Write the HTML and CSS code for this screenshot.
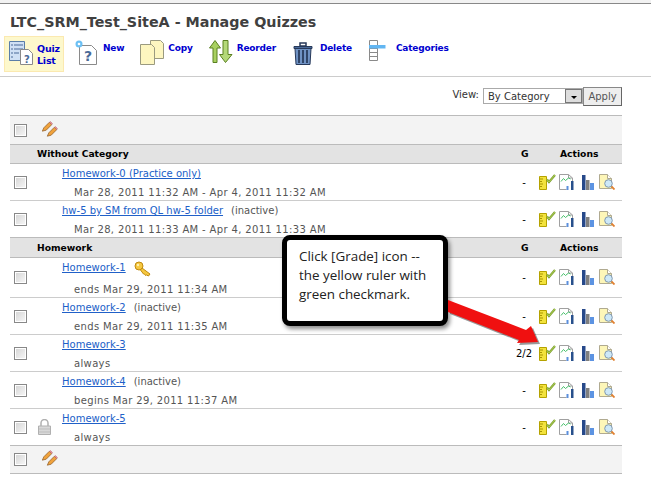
FILE: index.html
```html
<!DOCTYPE html>
<html lang="en">
<head>
<meta charset="utf-8">
<title>Manage Quizzes</title>
<link rel="stylesheet" href="styles.css">
</head>
<body>
<svg class="defs" width="0" height="0" aria-hidden="true">
  <defs>
    <g id="i-pencils">
      <path d="M.3 10.200 1.800 6.800 7.300 1.300 9.700 3.700 4.200 9.200z" fill="#f0a23c" stroke="#8a5a28" stroke-width=".7"/>
      <path d="M7.300 1.300 8.500.5 10.500 2.500 9.700 3.700z" fill="#ea8c96" stroke="#a06060" stroke-width=".4"/>
      <path d="M5.300 15.200 6.800 11.800 12.300 6.300 14.700 8.700 9.200 14.200z" fill="#f0a23c" stroke="#8a5a28" stroke-width=".7"/>
      <path d="M12.300 6.300 13.500 5.500 15.500 7.500 14.700 8.700z" fill="#ea8c96" stroke="#a06060" stroke-width=".4"/>
    </g>
    <g id="i-grade">
      <path d="M.5 2.500h7v13h-7z" fill="#f2e23c" stroke="#b5a200"/>
      <path d="M1 5h3M1 7.500h2M1 10h3M1 12.500h2" stroke="#a89600" fill="none"/>
      <path d="M8 5.500 10 8 16 1" fill="none" stroke="#7c9e30" stroke-width="2.200"/>
      <path d="M8 5.500 10 8 16 1" fill="none" stroke="#b7dc5a" stroke-width=".8"/>
    </g>
    <g id="i-stats">
      <path d="M.5.500h9l4 3.500v3M.5.500v15h7" fill="#fff" stroke="#a0a0a0"/>
      <path d="M9.500.500v3.500h4" fill="none" stroke="#a0a0a0"/>
      <path d="M2 7.500l2.500-3 2 2 3-2.500 2 1" fill="none" stroke="#46c06a"/>
      <path d="M7.500 12h2v4h-2z" fill="#5b8fdc"/>
      <path d="M12 7h2.500v9H12z" fill="#28508c"/>
    </g>
    <g id="i-bars">
      <path d="M0 0h3.500v15H0z" fill="#27498a"/>
      <path d="M4 5h3.500v10H4z" fill="#7f7f7f"/>
      <path d="M8 8h4v7H8z" fill="#5c93e2"/>
    </g>
    <g id="i-preview">
      <path d="M.5.500h8l4 4v10H.5z" fill="#fdf6b8" stroke="#b0aa90"/>
      <path d="M8.500.500v4h4" fill="#fff" stroke="#b0aa90"/>
      <circle cx="9.500" cy="9.500" r="3.800" fill="#cde8f8" stroke="#8098b0"/>
      <path d="M12.500 12.500l3 3" stroke="#e08030" stroke-width="1.800"/>
    </g>
  </defs>
</svg>

<div class="topline"></div>
<h1 class="title">LTC_SRM_Test_SiteA - Manage Quizzes</h1>

<nav class="toolbar">
  <a class="tool tool-active tool-list" href="#">
    <svg width="25" height="25" viewBox="0 0 25 25"><path d="M.5.500h15v19H.5z" fill="#cfe0f4" stroke="#5a7ea8"/><path d="M2 4h2M5 4h9M2 8h2M5 8h9M2 12h2M5 12h5M2 16h2" stroke="#4a6a98"/><path d="M11.500 8.500h8l4 4v11h-12z" fill="#fff" stroke="#8a8a8a"/><text x="15" y="22" class="qmark-s">?</text></svg>
    <span>Quiz<br>List</span>
  </a>
  <a class="tool tool-new" href="#">
    <svg width="24" height="25" viewBox="0 0 24 25"><path d="M4.500 5.500h12l5 5v14h-17z" fill="#fff" stroke="#8a8a8a"/><circle cx="4" cy="4" r="3.500" fill="#6cc0f4"/><circle cx="4" cy="4" r="1.300" fill="#fff"/><text x="9" y="21" class="qmark">?</text></svg>
    <span>New</span>
  </a>
  <a class="tool tool-copy" href="#">
    <svg width="25" height="25" viewBox="0 0 25 25"><path d="M10.500.500h10l3 3v15h-13z" fill="#fdf6c0" stroke="#9a9a80"/><path d="M.5 4.500h11l3 3v17H.5z" fill="#fdf6c0" stroke="#9a9a80"/></svg>
    <span>Copy</span>
  </a>
  <a class="tool tool-reorder" href="#">
    <svg width="24" height="23" viewBox="0 0 24 23"><path d="M6 .5.500 8H4v14.500h4V8h3.500z" fill="#a8d060" stroke="#5a8020"/><path d="M14 .5v14h-3.500L16.500 22.500l6.500-8h-4V.5z" fill="#b4d878" stroke="#5a8020"/></svg>
    <span>Reorder</span>
  </a>
  <a class="tool tool-delete" href="#">
    <svg width="20" height="25" viewBox="0 0 20 25"><path d="M1 5.500h18v2H1z" fill="#4a6a9a" stroke="#27395a"/><path d="M7 2h6v3H7z" fill="none" stroke="#27395a" stroke-width="1.500"/><path d="M2 7.500h16l-1 16H3z" fill="#6f92c4" stroke="#27395a"/><path d="M6 9v13M10 9v13M14 9v13" stroke="#1d2c4a" stroke-width="1.500"/></svg>
    <span>Delete</span>
  </a>
  <a class="tool tool-cat" href="#">
    <svg width="17" height="21" viewBox="0 0 17 21"><path d="M.5.500h8v20h-8zM.5 8.500h8M.5 12.500h8M.5 16.500h8" fill="#fff" stroke="#8a8a8a"/><path d="M0 5h16.500v3.500H0z" fill="#62b6f2"/></svg>
    <span>Categories</span>
  </a>
</nav>

<div class="viewbar">
  <span class="view-label">View:</span>
  <span class="select"><span class="select-text">By Category</span><span class="select-btn"><i></i></span></span>
  <button class="apply" type="button">Apply</button>
</div>

<main class="list">
  <div class="bulk bulk-top">
    <span class="check"></span>
    <svg class="pencils" width="16" height="16" viewBox="0 0 16 16"><use href="#i-pencils"/></svg>
  </div>

  <div class="cat cat-1"><span class="cat-name">Without Category</span><span class="col-g">G</span><span class="col-actions">Actions</span></div>

  <div class="row">
    <span class="check"></span><span class="flag"></span>
    <div class="info"><div class="line1"><a href="#">Homework-0 (Practice only)</a></div><div class="line2">Mar 28, 2011 11:32 AM - Apr 4, 2011 11:32 AM</div></div>
    <span class="grade">-</span>
    <span class="acts"><svg class="a1" width="17" height="16" viewBox="0 0 17 16"><use href="#i-grade"/></svg><svg class="a2" width="15" height="16" viewBox="0 0 15 16"><use href="#i-stats"/></svg><svg class="a3" width="12" height="15" viewBox="0 0 12 15"><use href="#i-bars"/></svg><svg class="a4" width="16" height="16" viewBox="0 0 16 16"><use href="#i-preview"/></svg></span>
  </div>
  <div class="row">
    <span class="check"></span><span class="flag"></span>
    <div class="info"><div class="line1"><a href="#">hw-5 by SM from QL hw-5 folder</a><span class="state">(inactive)</span></div><div class="line2">Mar 28, 2011 11:33 AM - Apr 4, 2011 11:33 AM</div></div>
    <span class="grade">-</span>
    <span class="acts"><svg class="a1" width="17" height="16" viewBox="0 0 17 16"><use href="#i-grade"/></svg><svg class="a2" width="15" height="16" viewBox="0 0 15 16"><use href="#i-stats"/></svg><svg class="a3" width="12" height="15" viewBox="0 0 12 15"><use href="#i-bars"/></svg><svg class="a4" width="16" height="16" viewBox="0 0 16 16"><use href="#i-preview"/></svg></span>
  </div>

  <div class="cat cat-2"><span class="cat-name">Homework</span><span class="col-g">G</span><span class="col-actions">Actions</span></div>

  <div class="row row-tall">
    <span class="check"></span><span class="flag"></span>
    <div class="info"><div class="line1"><a href="#">Homework-1</a><svg class="key" width="17" height="16" viewBox="0 0 17 16"><circle cx="5" cy="5" r="4" fill="#f6c840" stroke="#c08a10"/><circle cx="4" cy="4" r="1.200" fill="#fff2b0"/><path d="M8 7l8 6-1.500 2-2-1-1 .5-1-1.500-1 0L6.500 9z" fill="#f6c840" stroke="#c08a10"/></svg></div><div class="line2">ends Mar 29, 2011 11:34 AM</div></div>
    <span class="grade">-</span>
    <span class="acts"><svg class="a1" width="17" height="16" viewBox="0 0 17 16"><use href="#i-grade"/></svg><svg class="a2" width="15" height="16" viewBox="0 0 15 16"><use href="#i-stats"/></svg><svg class="a3" width="12" height="15" viewBox="0 0 12 15"><use href="#i-bars"/></svg><svg class="a4" width="16" height="16" viewBox="0 0 16 16"><use href="#i-preview"/></svg></span>
  </div>
  <div class="row">
    <span class="check"></span><span class="flag"></span>
    <div class="info"><div class="line1"><a href="#">Homework-2</a><span class="state">(inactive)</span></div><div class="line2">ends Mar 29, 2011 11:35 AM</div></div>
    <span class="grade">-</span>
    <span class="acts"><svg class="a1" width="17" height="16" viewBox="0 0 17 16"><use href="#i-grade"/></svg><svg class="a2" width="15" height="16" viewBox="0 0 15 16"><use href="#i-stats"/></svg><svg class="a3" width="12" height="15" viewBox="0 0 12 15"><use href="#i-bars"/></svg><svg class="a4" width="16" height="16" viewBox="0 0 16 16"><use href="#i-preview"/></svg></span>
  </div>
  <div class="row">
    <span class="check"></span><span class="flag"></span>
    <div class="info"><div class="line1"><a href="#">Homework-3</a></div><div class="line2">always</div></div>
    <span class="grade">2/2</span>
    <span class="acts"><svg class="a1" width="17" height="16" viewBox="0 0 17 16"><use href="#i-grade"/></svg><svg class="a2" width="15" height="16" viewBox="0 0 15 16"><use href="#i-stats"/></svg><svg class="a3" width="12" height="15" viewBox="0 0 12 15"><use href="#i-bars"/></svg><svg class="a4" width="16" height="16" viewBox="0 0 16 16"><use href="#i-preview"/></svg></span>
  </div>
  <div class="row">
    <span class="check"></span><span class="flag"></span>
    <div class="info"><div class="line1"><a href="#">Homework-4</a><span class="state">(inactive)</span></div><div class="line2">begins Mar 29, 2011 11:37 AM</div></div>
    <span class="grade">-</span>
    <span class="acts"><svg class="a1" width="17" height="16" viewBox="0 0 17 16"><use href="#i-grade"/></svg><svg class="a2" width="15" height="16" viewBox="0 0 15 16"><use href="#i-stats"/></svg><svg class="a3" width="12" height="15" viewBox="0 0 12 15"><use href="#i-bars"/></svg><svg class="a4" width="16" height="16" viewBox="0 0 16 16"><use href="#i-preview"/></svg></span>
  </div>
  <div class="row">
    <span class="check"></span><span class="flag"><svg width="13" height="16" viewBox="0 0 13 16"><path d="M3 7V4a3.500 3.500 0 0 1 7 0v3" fill="none" stroke="#b0b0b0" stroke-width="1.500"/><path d="M.5 7h12v8.500H.5z" fill="#d8d8d8" stroke="#b0b0b0"/><path d="M1 10h11M1 13h11" stroke="#bdbdbd"/></svg></span>
    <div class="info"><div class="line1"><a href="#">Homework-5</a></div><div class="line2">always</div></div>
    <span class="grade">-</span>
    <span class="acts"><svg class="a1" width="17" height="16" viewBox="0 0 17 16"><use href="#i-grade"/></svg><svg class="a2" width="15" height="16" viewBox="0 0 15 16"><use href="#i-stats"/></svg><svg class="a3" width="12" height="15" viewBox="0 0 12 15"><use href="#i-bars"/></svg><svg class="a4" width="16" height="16" viewBox="0 0 16 16"><use href="#i-preview"/></svg></span>
  </div>

  <div class="bulk bulk-bottom">
    <span class="check"></span>
    <svg class="pencils" width="16" height="16" viewBox="0 0 16 16"><use href="#i-pencils"/></svg>
  </div>
</main>

<div class="callout">Click [Grade] icon --<br>the yellow ruler with<br>green checkmark.</div>
<svg class="arrow" width="100" height="60" viewBox="0 0 100 60">
  <path d="M1 3 1 15 72 43 70 46 91 45 84 29 79 33z" fill="#000" opacity=".4" transform="translate(2 2)"/>
  <path d="M1 3 1 15 72 43 70 46 91 45 84 29 79 33z" fill="#f01010"/>
</svg>
</body>
</html>
```

FILE: styles.css
```css
* { box-sizing: border-box; }
html, body { margin: 0; padding: 0; }
body {
  width: 651px;
  height: 497px;
  overflow: hidden;
  background: #fff;
  font-family: "DejaVu Sans", Verdana, sans-serif;
  font-size: 10px;
  color: #444;
  position: relative;
}
.defs { position: absolute; }
.topline { height: 4px; background: #f2f2f2; border-bottom: 1px solid #888; }
.title {
  margin: 9px 0 0 10px;
  font-size: 14.3px;
  line-height: 18px;
  font-weight: bold;
  color: #404040;
  white-space: nowrap;
}
.toolbar {
  margin: 5px 0 0;
  height: 41px;
  padding: 0 0 4px 4px;
  border-bottom: 1px solid #ccc;
  display: flex;
  align-items: flex-start;
}
.tool {
  display: flex;
  align-items: flex-start;
  color: #0000d0;
  font-weight: bold;
  font-size: 9px;
  letter-spacing: -.2px;
  line-height: 12px;
  text-decoration: none;
  height: 36px;
  padding-top: 4px;
}
.tool span { margin-top: 2px; }
.tool-active {
  width: 60px;
  background: #fdf8cc;
  border: 1px solid #fbe9b0;
  padding: 4px 0 0 4px;
  font-size: 9.5px;
}
.tool-active svg { margin-right: 3px; }
.tool-new { margin-left: 11px; }
.tool-new span { margin-left: 4px; }
.tool-copy { margin-left: 16px; }
.tool-copy span { margin-left: 3px; }
.tool-reorder { margin-left: 16px; }
.tool-reorder span { margin-left: 4px; }
.tool-delete { margin-left: 17px; }
.tool-delete svg { margin-top: 1px; }
.tool-delete span { margin-left: 7px; }
.tool-cat { margin-left: 17px; }
.tool-cat span { margin-left: 10px; }
.qmark, .qmark-s { font-weight: bold; fill: #4a6a98; letter-spacing: 0; }
.qmark { font-size: 14px; }
.qmark-s { font-size: 10px; }

.viewbar {
  margin: 10px 29px 0 0;
  height: 28px;
  display: flex;
  justify-content: flex-end;
  align-items: flex-start;
}
.view-label { color: #333; font-size: 10px; line-height: 12px; margin: 2px 4px 0 0; }
.select {
  width: 100px;
  height: 16px;
  border: 1px solid #aaa;
  background: #fff;
  display: flex;
  align-items: center;
  justify-content: space-between;
  margin-top: 1px;
}
.select-text { margin-left: 4px; font-size: 10px; color: #333; }
.select-btn {
  width: 17px;
  height: 14px;
  background: #ddd;
  border: 1px solid #777;
  display: flex;
  align-items: center;
  justify-content: center;
}
.select-btn i {
  margin-top: 3px;
  border: 3px solid transparent;
  border-top: 3px solid #000;
  border-bottom: 0;
}
.apply {
  width: 39px;
  height: 19px;
  padding: 0;
  margin: 0;
  font: 10px "DejaVu Sans", Verdana, sans-serif;
  color: #555;
  background: #eee;
  border: 1px solid #888;
  border-right-color: #666;
  border-bottom-color: #666;
}

.list { margin: 0 29px 0 10px; width: 612px; }
.check {
  display: block;
  flex: none;
  width: 13px;
  height: 13px;
  margin-left: 4px;
  border: 1px solid #888;
  background: linear-gradient(135deg, #d4d4d4, #f8f8f8);
  box-shadow: inset 0 0 0 1px #fff;
}
.bulk {
  display: flex;
  align-items: center;
  background: #f3f3f3;
  border-top: 1px solid #bbb;
}
.bulk-top { height: 29px; }
.bulk-bottom { height: 29px; border-bottom: 1px solid #bbb; margin-top: -1px; }
.pencils { margin-left: 15px; margin-top: -3px; }
.cat {
  display: flex;
  align-items: center;
  height: 20px;
  background: #e3e3e3;
  border-top: 1px solid #bbb;
  border-bottom: 1px solid #bbb;
  font-weight: bold;
  color: #000;
  font-size: 9.2px;
}
.cat-1 { padding-bottom: 2px; }
.cat-2 { margin-top: -1px; height: 21px; }
.cat-name { margin-left: 27px; flex: 1; }
.col-g { width: 39px; }
.col-actions { width: 62px; }
.row {
  display: flex;
  align-items: stretch;
  height: 37px;
  border-bottom: 1px solid #ccc;
}
.row-tall { height: 40px; }
.row > .check { align-self: center; }
.flag { width: 13px; margin-left: 11px; margin-right: 5px; display: flex; align-items: center; flex: none; }
.info { margin-left: 6px; flex: 1; padding-top: 3px; min-width: 0; }
.line1 { height: 15px; line-height: 13px; display: flex; align-items: flex-start; white-space: nowrap; }
.line1 a { color: #2060c8; text-decoration: underline; }
.state { margin-left: 8px; color: #555; }
.line2 { margin: 4px 0 0 12px; line-height: 13px; color: #555; letter-spacing: .35px; white-space: nowrap; }
.row-tall .line1 { height: 18px; }
.key { margin-left: 8px; margin-top: 0; flex: none; }
.grade { width: 28px; text-align: center; color: #000; align-self: center; flex: none; }
.acts {
  width: 84px;
  padding: 10px 0 0 1px;
  display: flex;
  align-items: flex-start;
  flex: none;
}
.row-tall .acts { padding-top: 11px; }
.a1 { flex: none; }
.a2 { margin-left: 3px; flex: none; }
.a3 { margin-left: 8px; flex: none; margin-top: 1px; }
.a4 { margin-left: 5px; flex: none; }

.callout {
  position: absolute;
  left: 282px;
  top: 235px;
  width: 166px;
  height: 91px;
  border: 5px solid #000;
  border-radius: 8px;
  background: #fff;
  box-shadow: 2px 3px 4px rgba(0,0,0,.45);
  padding: 7px 0 0 12px;
  font-family: "Open Sans", sans-serif;
  font-size: 13.4px;
  line-height: 19px;
  color: #222;
}
.arrow { position: absolute; left: 447px; top: 297px; }
```
